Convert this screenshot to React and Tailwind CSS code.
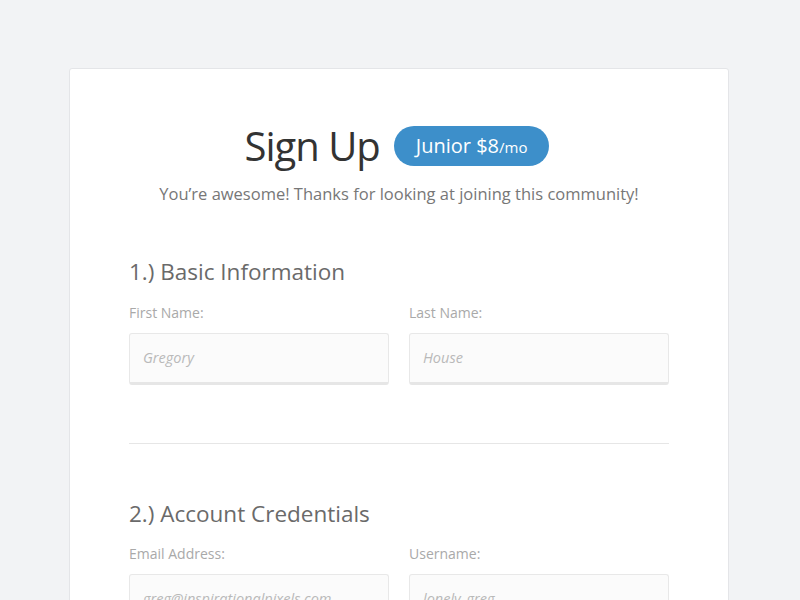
import React from 'react';

const Field = ({ label, placeholder }) => (
    <div className="flex flex-col">
        <label className="text-[14px] text-[#a9a9a9] leading-none mb-[13px]">{label}</label>
        <div className="h-[52px] bg-[#fbfbfb] border border-[#e8e8e8] border-b-[3px] border-b-[#e6e6e6] rounded-[3px] flex items-center px-[13px]">
            <span className="italic text-[14.5px] text-[#b9b9b9]">{placeholder}</span>
        </div>
    </div>
);

const App = () => {
    return (
        <div className="h-screen overflow-hidden bg-[#f2f3f5] pt-[68px]" style={{ fontFamily: '"Open Sans", sans-serif' }}>
            <div className="w-[660px] ml-[69px] bg-white border border-[#e4e5e8] rounded-[3px] px-[59px] pt-[57px] pb-[40px]">
                {/* Header */}
                <div className="flex items-center justify-center gap-[14px] pr-[4px]">
                    <h1 className="text-[40px] text-[#333] leading-none tracking-[-1px]">Sign Up</h1>
                    <span className="h-[40px] px-[22px] rounded-full bg-[#3d8fca] text-white flex items-center">
                        <span className="text-[20px]">Junior $8</span>
                        <span className="text-[15px] mt-[3px]">/mo</span>
                    </span>
                </div>
                <p className="text-center text-[16.5px] text-[#777] mt-[16px]">You’re awesome! Thanks for looking at joining this community!</p>

                {/* Basic Information */}
                <h2 className="text-[22.5px] text-[#6a6a6a] mt-[54px] leading-none">1.) Basic Information</h2>
                <div className="grid grid-cols-2 gap-[20px] mt-[23px]">
                    <Field label="First Name:" placeholder="Gregory" />
                    <Field label="Last Name:" placeholder="House" />
                </div>

                <div className="h-px bg-[#e6e6e6] mt-[58px]"></div>

                {/* Account Credentials */}
                <h2 className="text-[22.5px] text-[#6a6a6a] mt-[59px] leading-none">2.) Account Credentials</h2>
                <div className="grid grid-cols-2 gap-[20px] mt-[21px]">
                    <Field label="Email Address:" placeholder="greg@inspirationalpixels.com" />
                    <Field label="Username:" placeholder="lonely_greg" />
                </div>
            </div>
        </div>
    );
};

export default App;
